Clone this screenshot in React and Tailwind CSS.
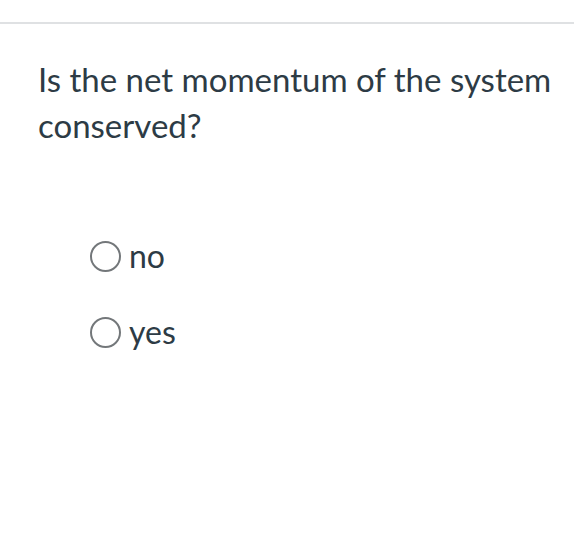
import React from 'react';

const options = ['no', 'yes'];

export default function App() {
  return (
    <div className="min-h-[560px] w-[574px] bg-white font-['Lato','Liberation_Sans',sans-serif] text-[#2d3b45]">
      <div className="h-[22px]" />
      <div className="h-[2px] bg-[#dfe1e3]" />
      <div className="pl-[38px] pr-2 pt-[32px]">
        <p className="text-[33px] leading-[46px]">Is the net momentum of the system conserved?</p>
        <div className="mt-[92px] flex flex-col gap-[44px] pl-[52px]">
          {options.map((o) => (
            <label key={o} className="flex items-center gap-[8px] h-[32px]">
              <span className="w-[31px] h-[31px] rounded-full border-[2px] border-[#73777a] bg-white" />
              <span className="text-[32px] leading-none">{o}</span>
            </label>
          ))}
        </div>
      </div>
    </div>
  );
}
